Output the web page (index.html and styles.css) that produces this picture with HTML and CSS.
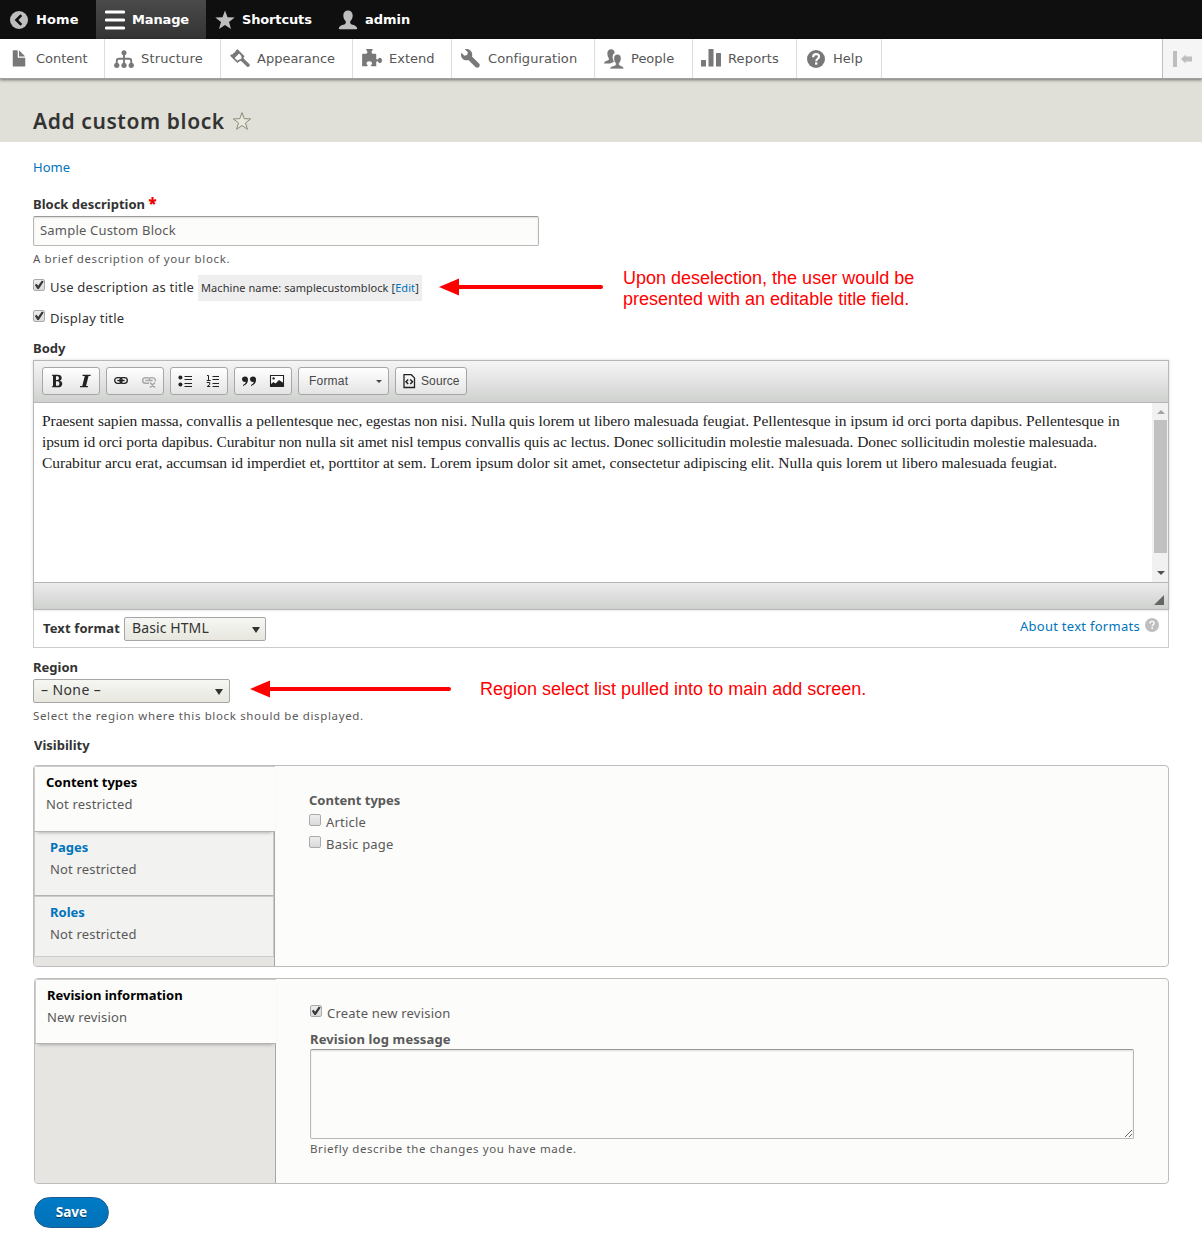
FILE: index.html
```html
<!DOCTYPE html>
<html lang="en">
<head>
  <meta charset="UTF-8" />
  <meta name="viewport" content="width=device-width, initial-scale=1">
  <title>Add custom block</title>
  <link rel="stylesheet" href="styles.css">
</head>
<body>
  <nav class="bar">
    <a class="tab tab-home" href="#">
      <svg viewBox="0 0 18 18" width="18" height="18"><circle cx="9" cy="9" r="9" fill="#bebebe"/><path d="M11.3 4.2L6.5 9l4.8 4.8" fill="none" stroke="#0f0f0f" stroke-width="2.6"/></svg>
      <span>Home</span>
    </a>
    <a class="tab tab-manage" href="#">
      <svg viewBox="0 0 20 20" width="20" height="20"><path d="M1.5 2h17M1.5 10h17M1.5 18h17" stroke="#fff" stroke-width="3.2" stroke-linecap="round"/></svg>
      <span>Manage</span>
    </a>
    <a class="tab tab-shortcuts" href="#">
      <svg viewBox="0 0 20 20" width="20" height="20"><path d="M10 .4l2.5 6.8 7.2.3-5.7 4.5 2 7L10 15l-6 4 2-7L.3 7.5l7.2-.3z" fill="#bebebe"/></svg>
      <span>Shortcuts</span>
    </a>
    <a class="tab tab-user" href="#">
      <svg viewBox="0 0 20 20" width="20" height="20"><path d="M10 .4c3 0 4.7 2 4.7 5 0 2.5-1 4.4-2.2 5.7-.6.9-.4 2.4.4 2.9 2 1.1 6 1.5 6.3 4.5 0 .5-.2.7-.7.7h-17c-.5 0-.7-.2-.7-.7.3-3 4.300-3.400 6.300-4.500.8-.5 1-2 .4-2.900C6.300 9.800 5.300 7.900 5.300 5.400c0-3 1.700-5 4.700-5z" fill="#bebebe"/></svg>
      <span>admin</span>
    </a>
  </nav>

  <nav class="tray">
    <a class="item item-content" href="#">
      <svg viewBox="0 0 16 16"><path d="M12.500 7h-5a.5.5 0 0 1-.5-.5v-5a.5.5 0 0 0-.5-.5h-3a.5.5 0 0 0-.5.5v12a.5.5 0 0 0 .5.5h9a.5.5 0 0 0 .5-.5v-6a.5.5 0 0 0-.5-.5zM8.500 6h4c.3 0 .3-.2.100-.4L8.400 1.300C8.200 1.100 8 1.200 8 1.500v4c0 .3.200.5.5.5z"/></svg>
      <span>Content</span>
    </a>
    <a class="item item-structure" href="#">
      <svg viewBox="0 0 16 16"><path d="M8 3v9M2.200 12V9.600Q2.200 7.800 4 7.800h8q1.800 0 1.800 1.800V12" fill="none" stroke="#787878" stroke-width="1.5"/><circle cx="8" cy="3" r="2"/><circle cx="2.2" cy="13" r="2.1"/><circle cx="8" cy="13" r="2.1"/><circle cx="13.8" cy="13" r="2.1"/></svg>
      <span>Structure</span>
    </a>
    <a class="item item-appearance" href="#">
      <svg viewBox="0 0 16 16"><path fill-rule="evenodd" d="M5.900 0l5.700 5.700c-.9.700-.9 1.600-.3 2.200l4.300 4.300c1 1-.8 2.900-1.900 1.900L9.300 9.900c-.7-.6-1.500-.5-2.200.3L5.900 11.100.1 5.300l1.200-1.200.7.300 1-1.500.9-.2.700-1.400zM7.300 3.600L3.700 7.200l2.200 2.200c.8-1.200 2.400-.9 3.100-1.900.5-.7.300-1.300-.1-2.200z"/></svg>
      <span>Appearance</span>
    </a>
    <a class="item item-extend" href="#">
      <svg viewBox="0 0 16 16"><path d="M3.300.5c0-.3.200-.5.500-.5h4.300c.3 0 .5.200.5.500 0 .7-1 .8-1 1.700 0 .8.500 1.500 1 1.500h2.200c.4 0 .6.200.6.600v3.200c0 .5.400.9.900.9.800 0 .8-1.500 1.900-1.500 1.100 0 1.800.7 1.800 2.100s-.7 2.300-1.800 2.300c-1.100 0-1.100-1.500-1.900-1.500-.5 0-.9.400-.9.900v3H7.600c-.5 0-.6-.3-.4-.7.300-.8.800-.7.800-1.700 0-1-.9-1.600-2.200-1.600s-2.200.6-2.200 1.600c0 1 .6.900.9 1.700.100.400 0 .7-.5.700H.1V4.300c0-.4.200-.6.600-.6h2.600c.5 0 1-.7 1-1.400 0-.9-1-1.100-1-1.800z"/></svg>
      <span>Extend</span>
    </a>
    <a class="item item-config" href="#">
      <svg viewBox="0 0 16 16"><path d="M14.416 11.586L8.750 5.921c.15-.449.252-.921.252-1.421 0-2.485-2.016-4.500-4.502-4.500-.505 0-.981.102-1.434.255l2.431 2.431-.588 2.196-2.196.588L.268 3.025C.106 3.489 0 3.981 0 4.500 0 6.986 2.014 9 4.500 9c.5 0 .972-.102 1.421-.251l5.667 5.665c.781.781 2.047.781 2.828 0s.781-2.047 0-2.828z"/></svg>
      <span>Configuration</span>
    </a>
    <a class="item item-people" href="#">
      <svg viewBox="0 0 16 16"><path d="M5.600.1c2 0 2.900 1.200 2.900 3-.9.600-1.600 1.600-1.600 3.200 0 1.500.5 2.500 1.200 3.400-.5.900-2 1.200-3.200 1.900H.4c-.4 0-.4-.3-.3-.6.400-1.500 2.800-1.500 3.600-2.300.4-.5.2-1.300-.2-1.900C3 6 2.700 4.800 2.700 3.400c0-2 1-3.300 2.900-3.300z"/><path stroke="#fff" stroke-width=".5" d="M10.800 4.100c1.900 0 2.900 1.300 2.900 3.400 0 1.500-.5 2.700-1.200 3.500-.5.600-.5 1.500 0 1.900 1 .6 3 .7 3.300 2.300.1.400-.1.700-.4.700H5.200c-.3 0-.5-.3-.4-.7.3-1.600 3.300-1.700 4.200-2.300.5-.4.500-1.300 0-1.900-.7-.8-1.200-2-1.200-3.500 0-2.100 1.100-3.400 3-3.400z"/></svg>
      <span>People</span>
    </a>
    <a class="item item-reports" href="#">
      <svg viewBox="0 0 16 16"><rect y="8.8" width="4" height="5.2" rx=".4"/><rect x="6" width="4" height="14" rx=".4"/><rect x="12" y="3.2" width="4" height="10.8" rx=".4"/></svg>
      <span>Reports</span>
    </a>
    <a class="item item-help" href="#">
      <svg viewBox="0 0 16 16"><circle cx="8" cy="8" r="7.2"/><path d="M5.700 6.500c0-1.600 1-2.400 2.400-2.400s2.300.8 2.300 2c0 1.700-2.200 1.700-2.200 3.600" fill="none" stroke="#fff" stroke-width="1.7"/><rect x="7.2" y="10.7" width="1.9" height="1.8" fill="#fff"/></svg>
      <span>Help</span>
    </a>
    <a class="toggle" href="#" aria-label="Vertical orientation">
      <svg viewBox="0 0 20 16" width="20" height="16"><path d="M0 0h4v16H0zM8 8l4.500-4.500v2.100H19v4.800h-6.500v2.100z" fill="#bebebe"/></svg>
    </a>
  </nav>

  <header class="page-header">
    <h1>Add custom block</h1>
    <svg viewBox="0 0 20 20" width="20" height="20"><path d="M10 1.600l2.200 6.100 6.500.2-5.200 4 1.900 6.400-5.400-3.800-5.400 3.800 1.900-6.400-5.200-4 6.500-.2z" fill="#e8e8de" stroke="#8c8c78" stroke-width="1"/></svg>
  </header>

  <main class="page">
    <div class="breadcrumb"><a href="#">Home</a></div>

    <form>
      <label class="label label-desc" for="info">Block description <b class="required">*</b></label>
      <input class="text-field" id="info" type="text" value="Sample Custom Block">
      <div class="description description-block">A brief description of your block.</div>

      <div class="row row-title">
        <input type="checkbox" id="use-title" checked>
        <label class="option option-use" for="use-title">Use description as title</label>
        <span class="machine-name">Machine name: samplecustomblock [<a href="#">Edit</a>]</span>
        <svg class="arrow" viewBox="0 0 164 18" width="164" height="18"><path d="M0 9L20 .5v17z" fill="#f00"/><path d="M19 9h143" stroke="#f00" stroke-width="4" stroke-linecap="round"/></svg>
        <p class="note">Upon deselection, the user would be<br>presented with an editable title field.</p>
      </div>
      <div class="row row-display">
        <input type="checkbox" id="display" checked>
        <label class="option option-display" for="display">Display title</label>
      </div>

      <div class="label label-body">Body</div>
      <div class="editor">
        <div class="editor-top">
          <div class="group">
            <svg viewBox="1 1 14 14" width="16" height="16"><path fill-rule="evenodd" d="M3.500 2.500h5.200c2 0 3.400 1 3.400 2.800 0 1.200-.6 2-1.700 2.400 1.400.3 2.200 1.200 2.200 2.600 0 2-1.500 3.200-3.800 3.200H3.500v-1h1v-9h-1zm3.600 1.300v3.300h1c1.100 0 1.600-.6 1.600-1.700 0-1-.5-1.600-1.600-1.600zm0 4.500v3.900h1.200c1.200 0 1.800-.7 1.800-2s-.7-1.900-1.900-1.900z"/></svg>
            <svg viewBox="1 1 14 14" width="16" height="16"><path d="M6 2.500h7l-.2 1.200h-1.700l-2.200 8.600h1.800l-.3 1.200H3.500l.3-1.200h1.800l2.200-8.600H5.700z"/></svg>
          </div>
          <div class="group">
            <svg viewBox="0 0 16 16" width="16" height="16"><rect x="1.7" y="4.7" width="7.4" height="5.6" rx="2.8" fill="none" stroke="#222" stroke-width="1.3"/><rect x="6.9" y="4.7" width="7.4" height="5.6" rx="2.8" fill="none" stroke="#222" stroke-width="1.3"/><path d="M4.300 7.500h7.400" stroke="#222" stroke-width="1.3"/></svg>
            <svg class="disabled" viewBox="0 0 16 16" width="16" height="16"><path d="M8 10.300H4.500a2.800 2.800 0 0 1 0-5.600h1.800a2.800 2.800 0 0 1 2.600 2M8.500 4.700h3.200a2.800 2.800 0 0 1 2.600 3.600M4.300 7.500h7.400M9 9.500l5 5M14 9.500l-5 5" fill="none" stroke="#222" stroke-width="1.5"/></svg>
          </div>
          <div class="group">
            <svg viewBox="0 0 16 16" width="16" height="16"><circle cx="3.4" cy="4.5" r="2"/><circle cx="3.4" cy="11.5" r="2"/><path d="M7.500 3.500H15M7.500 6.500H15M7.500 10.500H15M7.500 13.500H15" stroke="#222" stroke-width="1"/></svg>
            <svg viewBox="0 0 16 16" width="16" height="16"><path d="M2 2.500h1.500V7M1.700 7.500h4M1.700 9.500h3v2l-2.500 2h3M7.500 3.500H14M7.500 6.500H14M7.500 10.500H14M7.500 13.500H14" fill="none" stroke="#222" stroke-width="1"/></svg>
          </div>
          <div class="group">
            <svg viewBox="0 0 16 16" width="16" height="16"><path d="M4 3.500c2 0 3 1.200 3 3.300C7 10 5 12.200 2 13v-1c1.700-.7 2.600-1.700 2.700-3.200C2.700 9.200 1 8 1 6.200 1 4.600 2.200 3.500 4 3.500zM12 3.500c2 0 3 1.200 3 3.300 0 3.200-2 5.400-5 6.200v-1c1.700-.7 2.600-1.700 2.700-3.200C10.700 9.200 9 8 9 6.200c0-1.600 1.200-2.700 3-2.700z"/></svg>
            <svg viewBox="0 0 16 16" width="16" height="16"><path d="M1.500 2.500h13v11h-13z" fill="#fff" stroke="#222" stroke-width="1.1"/><circle cx="4.6" cy="5.4" r="1.2"/><path d="M2 13v-2l2.500-2 2 1.500L10 7l4.500 3v3z"/></svg>
          </div>
          <div class="group group-format"><span>Format</span><i class="caret"></i></div>
          <div class="group group-source">
            <svg viewBox="0 0 16 16" width="16" height="16"><path d="M3 1.700h7.300l3.200 3.200v9.600H3z" fill="none" stroke="#222" stroke-width="1.3"/><path d="M7.200 6.500L5 8.800l2.200 2.300M9.300 6.500l2.200 2.300-2.200 2.300" fill="none" stroke="#222" stroke-width="1.5"/></svg>
            <span>Source</span>
          </div>
        </div>
        <div class="editor-main">
          <p class="editor-text">
            <span class="line1">Praesent sapien massa, convallis a pellentesque nec, egestas non nisi. Nulla quis lorem ut libero malesuada feugiat. Pellentesque in ipsum id orci porta dapibus. Pellentesque in</span><br>
            <span class="line2">ipsum id orci porta dapibus. Curabitur non nulla sit amet nisl tempus convallis quis ac lectus. Donec sollicitudin molestie malesuada. Donec sollicitudin molestie malesuada.</span><br>
            <span class="line3">Curabitur arcu erat, accumsan id imperdiet et, porttitor at sem. Lorem ipsum dolor sit amet, consectetur adipiscing elit. Nulla quis lorem ut libero malesuada feugiat.</span>
          </p>
          <div class="scrollbar">
            <i class="up"></i>
            <i class="thumb"></i>
            <i class="down"></i>
          </div>
        </div>
        <div class="editor-bottom"><i class="resizer"></i></div>
      </div>
      <div class="format-row">
        <label class="label label-format" for="format">Text format</label>
        <span class="select select-format"><select id="format"><option>Basic HTML</option></select></span>
        <a class="about" href="#">About text formats</a>
        <svg class="help-icon" viewBox="0 0 14 14" width="14" height="14"><circle cx="7" cy="7" r="7" fill="#bebebe"/><path d="M4.900 5.500c0-1.400.9-2.100 2.200-2.100s2 .7 2 1.800c0 1.500-1.900 1.500-1.900 3.100" fill="none" stroke="#fff" stroke-width="1.4"/><rect x="6.4" y="9.2" width="1.6" height="1.6" fill="#fff"/></svg>
      </div>

      <label class="label label-region" for="region">Region</label>
      <div class="row row-region">
        <span class="select select-region"><select id="region"><option>– None –</option></select></span>
        <svg class="arrow" viewBox="0 0 202 18" width="202" height="18"><path d="M0 9L20 .5v17z" fill="#f00"/><path d="M19 9h180" stroke="#f00" stroke-width="4" stroke-linecap="round"/></svg>
        <p class="note">Region select list pulled into to main add screen.</p>
      </div>
      <div class="description description-region">Select the region where this block should be displayed.</div>

      <div class="label label-visibility">Visibility</div>
      <section class="tabs tabs-visibility">
        <ul class="tabs-menu">
          <li class="selected"><strong>Content types</strong><span>Not restricted</span></li>
          <li><strong>Pages</strong><span>Not restricted</span></li>
          <li><strong>Roles</strong><span>Not restricted</span></li>
        </ul>
        <div class="pane">
          <div class="pane-label">Content types</div>
          <div class="pane-option"><input type="checkbox" id="article"><label for="article">Article</label></div>
          <div class="pane-option"><input type="checkbox" id="page"><label for="page">Basic page</label></div>
        </div>
      </section>

      <section class="tabs tabs-revision">
        <ul class="tabs-menu">
          <li class="selected"><strong>Revision information</strong><span>New revision</span></li>
        </ul>
        <div class="pane">
          <div class="pane-option"><input type="checkbox" id="revision" checked><label for="revision">Create new revision</label></div>
          <label class="pane-label label-log" for="log">Revision log message</label>
          <textarea id="log"></textarea>
          <div class="description description-log">Briefly describe the changes you have made.</div>
        </div>
      </section>

      <button class="save" type="button">Save</button>
    </form>
  </main>
</body>
</html>
```
FILE: styles.css
```css
* {
  box-sizing: border-box;
}

body {
  margin: 0;
  background: #fff;
  color: #333;
  font-family: "Noto Sans", "Open Sans", sans-serif;
  font-size: 13px;
  line-height: 20px;
}

a {
  color: #0074bd;
  text-decoration: none;
}

svg {
  display: block;
  flex: none;
}

p, ul, h1 {
  margin: 0;
  padding: 0;
}

label, span, strong {
  white-space: nowrap;
}

/* toolbar */
.bar {
  display: flex;
  height: 39px;
  background: #0f0f0f;
  font-family: "DejaVu Sans", sans-serif;
}

.tab {
  display: flex;
  align-items: center;
  color: #fff;
  font-weight: bold;
  font-size: 13px;
  letter-spacing: -0.15px;
}

.tab-home { width: 96px; padding-left: 10px; gap: 8px; letter-spacing: 0.1px; }
.tab-manage { width: 110px; padding-left: 9px; gap: 7px; background: linear-gradient(#4a4a4a, #333); }
.tab-shortcuts { width: 123px; padding-left: 9px; gap: 7px; }
.tab-user { padding-left: 9px; gap: 7px; letter-spacing: 0; }

.tray {
  position: relative;
  display: flex;
  height: 40px;
  background: #fff;
  border-bottom: 1px solid #a0a0a0;
  box-shadow: 0 1px 3px rgba(0, 0, 0, 0.5);
  font-family: "DejaVu Sans", sans-serif;
}

.item {
  display: flex;
  align-items: center;
  gap: 7px;
  padding-left: 9px;
  border-right: 1px solid #ddd;
  color: #565656;
}

.item svg {
  width: 20px;
  height: 20px;
  fill: #787878;
}

.item-content { width: 105px; }
.item-structure { width: 116px; letter-spacing: 0.15px; }
.item-appearance { width: 132px; }
.item-extend { width: 99px; }
.item-config { width: 143px; letter-spacing: 0.08px; }
.item-people { width: 98px; }
.item-reports { width: 104px; padding-left: 8px; letter-spacing: 0.15px; }
.item-help { width: 85px; }

.toggle {
  display: flex;
  align-items: center;
  width: 40px;
  margin-left: auto;
  padding-left: 10px;
  background: #f5f5f5;
  border-left: 1px solid #bfbfbf;
}

.page-header {
  display: flex;
  gap: 7px;
  height: 63px;
  padding: 29px 33px 0;
  background: #e0e0d8;
}

.page-header svg {
  margin-top: 3px;
}

h1 {
  font-size: 21px;
  line-height: 27px;
  font-weight: 600;
  letter-spacing: 0.6px;
}

/* form */
.page {
  padding: 15px 33px 0;
}

.label {
  display: block;
  font-weight: 700;
  line-height: 20px;
}

.label-desc {
  margin-top: 17px;
}

.required {
  color: #e00;
  font-size: 15px;
  line-height: 10px;
}

.text-field {
  display: block;
  width: 506px;
  height: 30px;
  margin-top: 2px;
  padding: 0 6px 2px;
  border: 1px solid #b8b8b8;
  border-top-color: #999;
  border-radius: 2px;
  background: #fcfcfa;
  box-shadow: inset 0 1px 2px rgba(0, 0, 0, 0.125);
  color: #595959;
  font: inherit;
  letter-spacing: 0.2px;
}

.description {
  color: #595959;
  font-size: 11.5px;
  letter-spacing: 0.64px;
}

.description-block {
  margin-top: 3px;
}

.description-log {
  letter-spacing: 0.6px;
}

.row {
  display: flex;
}

input[type="checkbox"] {
  appearance: none;
  flex: none;
  width: 12px;
  height: 12px;
  margin: 0 5px 0 0;
  border: 1px solid #aaa;
  border-radius: 2px;
  background: linear-gradient(#eee, #d9d9d9);
}

input[type="checkbox"]:checked::before {
  content: "";
  display: block;
  width: 10px;
  height: 10px;
  background: #3a3a3a;
  clip-path: polygon(8% 50%, 25% 38%, 42% 58%, 78% 6%, 98% 16%, 48% 90%, 34% 90%);
}

.row-title {
  height: 40px;
  margin-top: -1px;
}

.row-title input {
  margin-top: 11px;
}

.option-use {
  width: 148px;
  margin-top: 9px;
  letter-spacing: 0.23px;
}

.option-display {
  letter-spacing: 0.25px;
}

.machine-name {
  width: 224px;
  height: 26px;
  margin-top: 7px;
  padding-left: 3px;
  background: #eee;
  font-size: 11px;
  line-height: 26px;
  letter-spacing: 0.07px;
}

.row-title .arrow {
  margin: 10px 20px 0 17px;
}

/* red annotations */
.note {
  color: #f00;
  font-family: "Liberation Sans", Arial, sans-serif;
  font-size: 18px;
  line-height: 21px;
  white-space: nowrap;
}

.row-display {
  height: 30px;
}

.row-display input {
  margin-top: 2px;
}

.editor {
  margin-top: 2px;
  border: 1px solid #b6b6b6;
  box-shadow: 0 0 3px rgba(0, 0, 0, 0.15);
}

.editor-top {
  display: flex;
  gap: 6px;
  height: 42px;
  padding: 6px 8px;
  background: linear-gradient(#f5f5f5, #cfd1cf);
  border-bottom: 1px solid #b6b6b6;
}

.group {
  display: flex;
  align-items: center;
  gap: 12px;
  width: 58px;
  height: 28px;
  padding-left: 6px;
  border: 1px solid #a6a6a6;
  border-radius: 3px;
  background: linear-gradient(#fff, #e4e4e4);
  color: #474747;
  font-family: "Liberation Sans", Arial, sans-serif;
  font-size: 12px;
}

.group svg {
  fill: #222;
}

.disabled {
  opacity: 0.35;
}

.group-format {
  justify-content: space-between;
  width: 91px;
  padding: 0 6px 0 10px;
  letter-spacing: 0.2px;
}

.caret {
  border: 3px solid transparent;
  border-top-color: #474747;
  border-bottom: 0;
}

.group-source {
  gap: 4px;
  width: 72px;
  padding-left: 5px;
  letter-spacing: 0.1px;
}

.editor-main {
  display: flex;
  height: 179px;
}

.editor-text {
  flex: 1;
  padding: 7px 8px;
  color: #222;
  font-family: "Liberation Serif", serif;
  font-size: 15.5px;
  line-height: 21px;
}

.line1 { letter-spacing: -0.05px; }
.line2 { letter-spacing: -0.1px; }
.line3 { letter-spacing: -0.03px; }

.scrollbar {
  display: flex;
  flex-direction: column;
  align-items: center;
  width: 16px;
  padding: 7px 1px 7px 2px;
  background: #f1f1f1;
}

.up {
  border: 4px solid transparent;
  border-top: 0;
  border-bottom-color: #a3a3a3;
}

.thumb {
  width: 13px;
  height: 133px;
  margin-top: 6px;
  background: #c1c1c1;
}

.down {
  margin-top: auto;
  border: 4px solid transparent;
  border-bottom: 0;
  border-top-color: #505050;
}

.editor-bottom {
  display: flex;
  justify-content: flex-end;
  align-items: flex-end;
  height: 27px;
  padding: 4px;
  border-top: 1px solid #b6b6b6;
  background: linear-gradient(#ebebeb, #cfd1cf);
}

.resizer {
  width: 10px;
  height: 10px;
  background: #666;
  clip-path: polygon(100% 0, 100% 100%, 0 100%);
}

.format-row {
  display: flex;
  height: 38px;
  padding: 6px 9px;
  border: 1px solid #ccc;
  border-top: 0;
}

.label-format {
  width: 81px;
  margin-top: 2px;
  letter-spacing: 0.12px;
}

.select {
  position: relative;
  height: 24px;
}

.select select {
  appearance: none;
  width: 100%;
  height: 24px;
  padding: 0 7px 2px;
  border: 1px solid #a6a6a6;
  border-radius: 2px;
  background: linear-gradient(#f6f6f3, #e7e7df);
  color: #333;
  font: 14px/20px "Noto Sans", sans-serif;
  letter-spacing: 0.1px;
}

.select::after {
  content: "";
  position: absolute;
  right: 6px;
  top: 10px;
  border: 4.5px solid transparent;
  border-top: 6px solid #333;
  border-bottom: 0;
}

.select-format {
  width: 142px;
  margin-top: 1px;
}

.select-region {
  width: 197px;
}

.select-region select {
  letter-spacing: 0.4px;
}

.select-region::after {
  right: 7px;
}

.about {
  margin-left: auto;
  margin-right: 5px;
  letter-spacing: 0.28px;
}

.help-icon {
  margin-top: 2px;
}

.label-region {
  margin-top: 9px;
}

.row-region {
  margin-top: 2px;
}

.row-region .arrow {
  margin: 1px 28px 0 20px;
}

.description-region {
  margin-top: 3px;
}

.label-visibility {
  margin: 9px 0 0 1px;
}

/* vertical tabs */
.tabs {
  display: flex;
  border: 1px solid #bdbdbd;
  border-radius: 4px;
  background: #fcfcfa;
  overflow: hidden;
}

.tabs-visibility {
  height: 202px;
  margin-top: 10px;
}

.tabs-revision {
  height: 206px;
  margin: 11px 0 0 1px;
}

.tabs-menu {
  width: 241px;
  background: #e6e5e1;
  border-right: 1px solid #a6a6a6;
  list-style: none;
}

.tabs-menu li {
  height: 65px;
  padding: 4px 15px;
  background: #f2f2f0;
  border: 1px solid #ccc;
  border-bottom-color: #b3b3b3;
}

.tabs-menu li:last-child {
  height: 61px;
  border-bottom-color: #ccc;
}

.tabs-menu li.selected {
  position: relative;
  width: 241px;
  height: 66px;
  margin-bottom: -1px;
  padding: 5px 11px;
  background: #fcfcfa;
  border-right: 0;
  border-bottom: 1px solid #b3b3b3;
  box-shadow: 0 3px 4px -3px rgba(0, 0, 0, 0.4);
}

.tabs-revision .tabs-menu li.selected {
  height: 65px;
}

.tabs-menu strong {
  display: block;
  color: #0074bd;
  font-weight: 700;
  line-height: 22px;
}

.tabs-menu .selected strong {
  color: #000;
  line-height: 21px;
}

.tabs-menu li span {
  display: block;
  color: #595959;
  line-height: 22px;
  letter-spacing: 0.17px;
}

.pane {
  flex: 1;
  padding: 24px 34px 0;
  color: #595959;
}

.pane-label {
  display: block;
  font-weight: 700;
  line-height: 20px;
}

.label-log {
  letter-spacing: 0.1px;
}

.pane-option {
  display: flex;
  height: 22px;
  padding-top: 2px;
  letter-spacing: 0.2px;
}

.pane-option input {
  margin-top: 2px;
}

.tabs-revision .pane-option {
  height: 26px;
  padding-top: 0;
}

textarea {
  display: block;
  width: 824px;
  height: 90px;
  border: 1px solid #b8b8b8;
  border-top-color: #999;
  border-radius: 2px;
  background: #fcfcfa;
  box-shadow: inset 0 1px 2px rgba(0, 0, 0, 0.125);
}

.save {
  display: block;
  width: 75px;
  height: 31px;
  margin: 13px 0 0 1px;
  padding: 0 0 2px;
  border: 1px solid #1e5c90;
  border-radius: 16px;
  background: linear-gradient(#007bc6, #0071b8);
  color: #fff;
  font: 700 13.5px/26px "Noto Sans", sans-serif;
  text-shadow: 0 1px rgba(0, 0, 0, 0.5);
}
```
